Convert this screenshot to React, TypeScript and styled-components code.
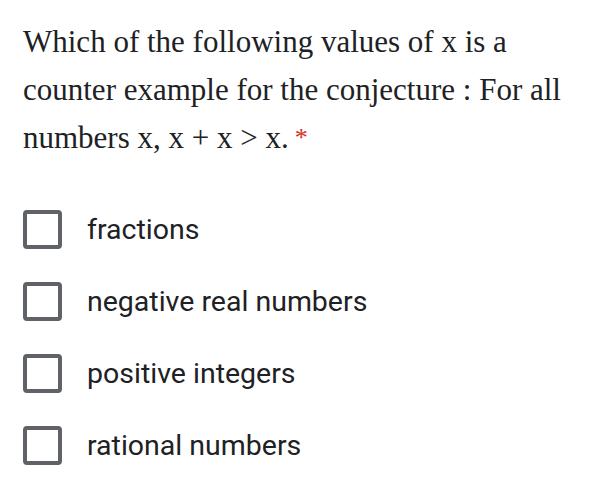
import styled, { createGlobalStyle } from 'styled-components';

const options = [
	'fractions',
	'negative real numbers',
	'positive integers',
	'rational numbers',
];

function App() {
	return (
		<>
			<GlobalStyle />
			<StyledContainer>
				<StyledQuestion>
					Which of the following values of x is a counter example for the
					conjecture : For all numbers x, x + x &gt; x.
					<StyledRequired>*</StyledRequired>
				</StyledQuestion>
				<StyledOptions>
					{options.map((option) => (
						<StyledOption key={option}>
							<StyledBox />
							<StyledLabel>{option}</StyledLabel>
						</StyledOption>
					))}
				</StyledOptions>
			</StyledContainer>
		</>
	);
}

const GlobalStyle = createGlobalStyle`
	* {
		box-sizing: border-box;
	}
	body {
		margin: 0;
		background: #ffffff;
	}
`;

const StyledContainer = styled.main`
	width: 597px;
	height: 485px;
	overflow: hidden;
	padding: 18px 0 0 23px;
	display: flex;
	flex-direction: column;
`;

const StyledQuestion = styled.h2`
	margin: 0;
	width: 560px;
	font-family: 'Liberation Serif', serif;
	font-weight: 400;
	font-size: 31px;
	line-height: 48px;
	color: #202124;
`;

const StyledRequired = styled.span`
	display: inline-block;
	margin-left: 6px;
	font-size: 26px;
	line-height: 26px;
	color: #d93025;
	vertical-align: 2px;
`;

const StyledOptions = styled.div`
	margin-top: 48px;
	display: flex;
	flex-direction: column;
	gap: 33px;
`;

const StyledOption = styled.label`
	display: flex;
	align-items: center;
	gap: 25px;
	cursor: pointer;
`;

const StyledBox = styled.span`
	width: 39px;
	height: 39px;
	flex-shrink: 0;
	border: 4px solid #5f6368;
	border-radius: 4px;
`;

const StyledLabel = styled.span`
	font-family: Roboto, 'Noto Sans', sans-serif;
	font-size: 28.5px;
	line-height: 34px;
	color: #202124;
`;

export default App;
